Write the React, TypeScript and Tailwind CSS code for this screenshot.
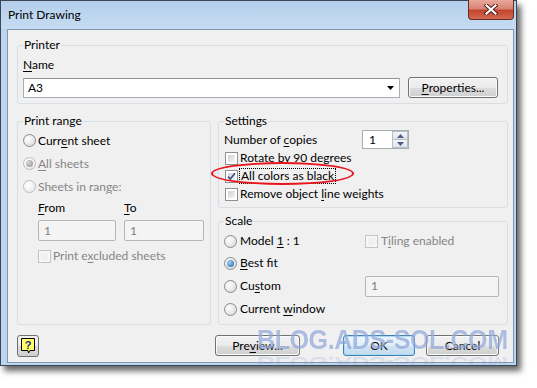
import React from 'react';

const U = ({ children }: { children: React.ReactNode }) => (
  <span className="underline decoration-1 underline-offset-[2px]">{children}</span>
);

const Radio = ({ checked = false, disabled = false }: { checked?: boolean; disabled?: boolean }) => (
  <span
    className={`flex h-[13px] w-[13px] shrink-0 items-center justify-center rounded-full border ${
      disabled
        ? 'border-[#bcbcbc] bg-[radial-gradient(circle_at_35%_35%,#ffffff,#e6e6e6)]'
        : 'border-[#8b8b8b] bg-[radial-gradient(circle_at_35%_35%,#ffffff,#d4d4d4)]'
    }`}
  >
    {checked && (
      <span
        className={`h-[7px] w-[7px] rounded-full ${
          disabled
            ? 'bg-[radial-gradient(circle_at_35%_35%,#d8d8d8,#8e8e8e)]'
            : 'bg-[radial-gradient(circle_at_35%_35%,#9fd4fa,#1d5ea8)]'
        }`}
      />
    )}
  </span>
);

const Check = ({ checked = false, disabled = false }: { checked?: boolean; disabled?: boolean }) => (
  <span
    className={`flex h-[13px] w-[13px] shrink-0 p-[2px] border ${
      disabled ? 'border-[#c4c4c4] bg-[#f7f7f7]' : 'border-[#8e8f8f] bg-white'
    }`}
  >
    <span
      className={`flex flex-1 items-center justify-center ${
        disabled ? 'bg-[#f0f0f0]' : 'bg-linear-to-br from-[#cdd0d5] to-[#f7f7f7]'
      }`}
    >
      {checked && (
        <svg width="9" height="9" viewBox="0 0 9 9" className="-m-[2px]">
          <path d="M1 4.6 L3.4 7 L8 1.2" stroke="#3e5188" strokeWidth="1.7" fill="none" />
        </svg>
      )}
    </span>
  </span>
);

const Btn = ({ w, children, primary = false, cls = '' }: { w: string; children: React.ReactNode; primary?: boolean; cls?: string }) => (
  <div
    className={`flex h-[21px] items-center justify-center rounded-[3px] border ${w} ${cls} ${
      primary
        ? 'border-[#3c7fb1] bg-[linear-gradient(#eef6fc_0%,#e0eef8_50%,#cfe4f3_50%,#c3dcee_100%)] shadow-[inset_0_0_0_1px_#a8dcf7]'
        : 'border-[#707070] bg-[linear-gradient(#f2f2f2_0%,#ebebeb_50%,#dddddd_50%,#cfcfcf_100%)] shadow-[inset_0_0_0_1px_#fbfbfb]'
    }`}
  >
    {children}
  </div>
);

const DisabledInput = ({ w }: { w: string }) => (
  <div className={`flex h-[21px] items-center rounded-[2px] border border-[#b5b5b5] bg-[#f4f4f4] pl-[5px] text-[#7d7d7d] ${w}`}>
    1
  </div>
);

export default function App() {
  return (
    <div className="relative h-[388px] w-[537px] overflow-hidden bg-white text-[12px] leading-[16px] text-black [font-family:Lato,'Liberation_Sans',sans-serif]">
      <div className="flex h-[366px] w-[517px] flex-col border border-[#3b4656] bg-[#bdd5ee] shadow-[4px_5px_6px_rgba(0,0,0,0.6)]">
        {/* title bar */}
        <div className="flex h-[28px] items-start justify-between bg-linear-to-b from-[#b4cfeb] to-[#c6dcf2] pl-[7px]">
          <span className="mt-[6px]">Print Drawing</span>
          <div className="-mt-[1px] mr-[2px] flex h-[20px] w-[46px] items-center justify-center rounded-b-[4px] border border-t-0 border-[#6b2a22] bg-[linear-gradient(#e9a99c_0%,#d98373_45%,#c4442f_55%,#d26a52_100%)]">
            <svg width="14" height="11" viewBox="0 0 14 11">
              <path d="M2.5 1.5 L11.5 9.5 M11.5 1.5 L2.5 9.5" stroke="#4b1a14" strokeWidth="4" strokeLinecap="square" />
              <path d="M2.5 1.5 L11.5 9.5 M11.5 1.5 L2.5 9.5" stroke="#ffffff" strokeWidth="2.2" strokeLinecap="square" />
            </svg>
          </div>
        </div>

        {/* client area */}
        <div className="mb-[2px] ml-[6px] mr-[2px] flex flex-1 flex-col border border-[#8397b0] bg-[#f0f0f0] pl-[9px] pr-[5px] pt-[7px]">
          {/* Printer */}
          <fieldset className="rounded-[3px] border border-[#d5dfe5] px-[5px] pb-[5px]">
            <legend className="px-[1px] leading-[16px]">Printer</legend>
            <div className="mt-[4px]">
              <U>N</U>ame
            </div>
            <div className="mt-[4px] flex items-center">
              <div className="flex h-[20px] w-[377px] items-center justify-between border border-[#abadb3] border-t-[#8e9297] bg-white pl-[4px] pr-[5px]">
                <span>A3</span>
                <svg width="7" height="4" viewBox="0 0 7 4">
                  <path d="M0 0 H7 L3.5 4 Z" fill="#000" />
                </svg>
              </div>
              <Btn w="w-[90px]" cls="ml-[8px]">
                <span>
                  <U>P</U>roperties...
                </span>
              </Btn>
            </div>
          </fieldset>

          <div className="mt-[9px] flex gap-[7px]">
            {/* Print range */}
            <fieldset className="w-[194px] rounded-[3px] border border-[#d5dfe5] px-[5px]">
              <legend className="px-[1px] leading-[16px]">Print range</legend>
              <div className="flex h-[23px] items-center gap-[2px]">
                <Radio />
                <span>
                  Curr<U>e</U>nt sheet
                </span>
              </div>
              <div className="flex h-[23px] items-center gap-[2px] text-[#858585]">
                <Radio checked disabled />
                <span>
                  <U>A</U>ll sheets
                </span>
              </div>
              <div className="flex h-[23px] items-center gap-[2px] text-[#858585]">
                <Radio disabled />
                <span>
                  Sheets in ran<U>g</U>e:
                </span>
              </div>
              <div className="mt-[2px] flex gap-[8px] pl-[15px]">
                <div className="flex w-[78px] flex-col gap-[4px]">
                  <span>
                    <U>F</U>rom
                  </span>
                  <DisabledInput w="w-[78px]" />
                </div>
                <div className="flex w-[80px] flex-col gap-[4px]">
                  <span>
                    <U>T</U>o
                  </span>
                  <DisabledInput w="w-[80px]" />
                </div>
              </div>
              <div className="mt-[7px] flex h-[16px] items-center gap-[2px] pl-[15px] text-[#858585]">
                <Check disabled />
                <span>
                  Print e<U>x</U>cluded sheets
                </span>
              </div>
            </fieldset>

            <div className="flex w-[290px] flex-col">
              {/* Settings */}
              <fieldset className="rounded-[3px] border border-[#d5dfe5] px-[5px] pb-[4px]">
                <legend className="px-[1px] leading-[16px]">Settings</legend>
                <div className="mt-[1px] flex h-[19px] items-center">
                  <span className="w-[138px]">
                    Number of <U>c</U>opies
                  </span>
                  <div className="flex h-[19px] w-[47px] border border-[#abadb3] bg-white">
                    <span className="flex flex-1 items-center pl-[6px]">1</span>
                    <div className="flex w-[16px] flex-col">
                      <div className="flex flex-1 items-center justify-center border border-[#b8bec6] bg-linear-to-b from-[#f4f6f9] to-[#dfe4ea]">
                        <svg width="7" height="4" viewBox="0 0 7 4">
                          <path d="M0 4 H7 L3.5 0 Z" fill="#4c5f86" />
                        </svg>
                      </div>
                      <div className="flex flex-1 items-center justify-center border border-t-0 border-[#b8bec6] bg-linear-to-b from-[#f4f6f9] to-[#dfe4ea]">
                        <svg width="7" height="4" viewBox="0 0 7 4">
                          <path d="M0 0 H7 L3.5 4 Z" fill="#4c5f86" />
                        </svg>
                      </div>
                    </div>
                  </div>
                </div>
                <div className="flex h-[18px] items-center gap-[2px] pl-[1px]">
                  <Check />
                  <span>Rotate by 90 degrees</span>
                </div>
                <div className="flex h-[18px] items-center gap-[1px] pl-[1px]">
                  <Check checked />
                  <span className="border border-dotted border-black px-[1px] leading-[14px]">All colors as black</span>
                </div>
                <div className="flex h-[18px] items-center gap-[2px] pl-[1px]">
                  <Check />
                  <span>
                    Remove object <U>l</U>ine weights
                  </span>
                </div>
              </fieldset>

              {/* Scale */}
              <fieldset className="mt-[5px] rounded-[3px] border border-[#d5dfe5] px-[5px] pb-[4px] pt-[1px]">
                <legend className="px-[1px] leading-[16px]">Scale</legend>
                <div className="grid grid-cols-[141px_1fr]">
                  <div className="flex h-[22px] items-center gap-[3px]">
                    <Radio />
                    <span>
                      Model <U>1</U> : 1
                    </span>
                  </div>
                  <div className="flex h-[22px] items-center gap-[3px] text-[#858585]">
                    <Check disabled />
                    <span>
                      T<U>i</U>ling enabled
                    </span>
                  </div>
                  <div className="col-span-2 flex h-[22px] items-center gap-[3px]">
                    <Radio checked />
                    <span>
                      <U>B</U>est fit
                    </span>
                  </div>
                  <div className="flex h-[24px] items-center gap-[3px]">
                    <Radio />
                    <span>
                      Cu<U>s</U>tom
                    </span>
                  </div>
                  <div className="flex h-[24px] items-center">
                    <DisabledInput w="w-[134px]" />
                  </div>
                  <div className="col-span-2 flex h-[22px] items-center gap-[3px]">
                    <Radio />
                    <span>
                      Current <U>w</U>indow
                    </span>
                  </div>
                </div>
              </fieldset>
            </div>
          </div>

          {/* bottom buttons */}
          <div className="mt-[10px] flex items-start">
            <div className="flex h-[22px] w-[22px] items-center justify-center rounded-[3px] border border-[#707070] bg-[linear-gradient(#f2f2f2_0%,#ebebeb_50%,#dddddd_50%,#cfcfcf_100%)]">
              <svg width="14" height="16" viewBox="0 0 14 16">
                <path d="M0.5 0.5 H13.5 V12.5 H9 L7.5 15 L7 12.5 H0.5 Z" fill="#ffff66" stroke="#000" strokeWidth="1" />
                <text x="7" y="10.5" textAnchor="middle" fontSize="11" fontWeight="bold" fill="#1b2a8c" fontFamily="Liberation Sans, sans-serif">
                  ?
                </text>
              </svg>
            </div>
            <Btn w="w-[85px]" cls="ml-[176px]">
              <span>
                Pre<U>v</U>iew...
              </span>
            </Btn>
            <Btn w="w-[72px]" cls="ml-[43px]" primary>
              OK
            </Btn>
            <Btn w="w-[73px]" cls="ml-[11px]">
              Cancel
            </Btn>
          </div>
        </div>
      </div>

      {/* red annotation ellipse */}
      <div className="absolute left-[211px] top-[162px] h-[23px] w-[143px] rounded-[50%] border-[2.5px] border-[#e8141b]" />

      {/* watermark */}
      <div className="pointer-events-none absolute left-[257px] top-[326px] origin-left scale-x-[0.93] whitespace-nowrap text-[27px] font-bold leading-[28px] tracking-[-0.5px] text-[#4d74c4]/45 [font-family:'Liberation_Sans',sans-serif] [text-shadow:0_0_2px_rgba(255,255,255,0.6)]">
        BLOG.ADS-SOL.COM
      </div>
      <div className="pointer-events-none absolute left-[257px] top-[348px] origin-left scale-x-[0.93] -scale-y-[0.6] whitespace-nowrap text-[27px] font-bold leading-[28px] tracking-[-0.5px] text-[#4d74c4]/20 [font-family:'Liberation_Sans',sans-serif] [mask-image:linear-gradient(to_top,black,transparent)]">
        BLOG.ADS-SOL.COM
      </div>
    </div>
  );
}
